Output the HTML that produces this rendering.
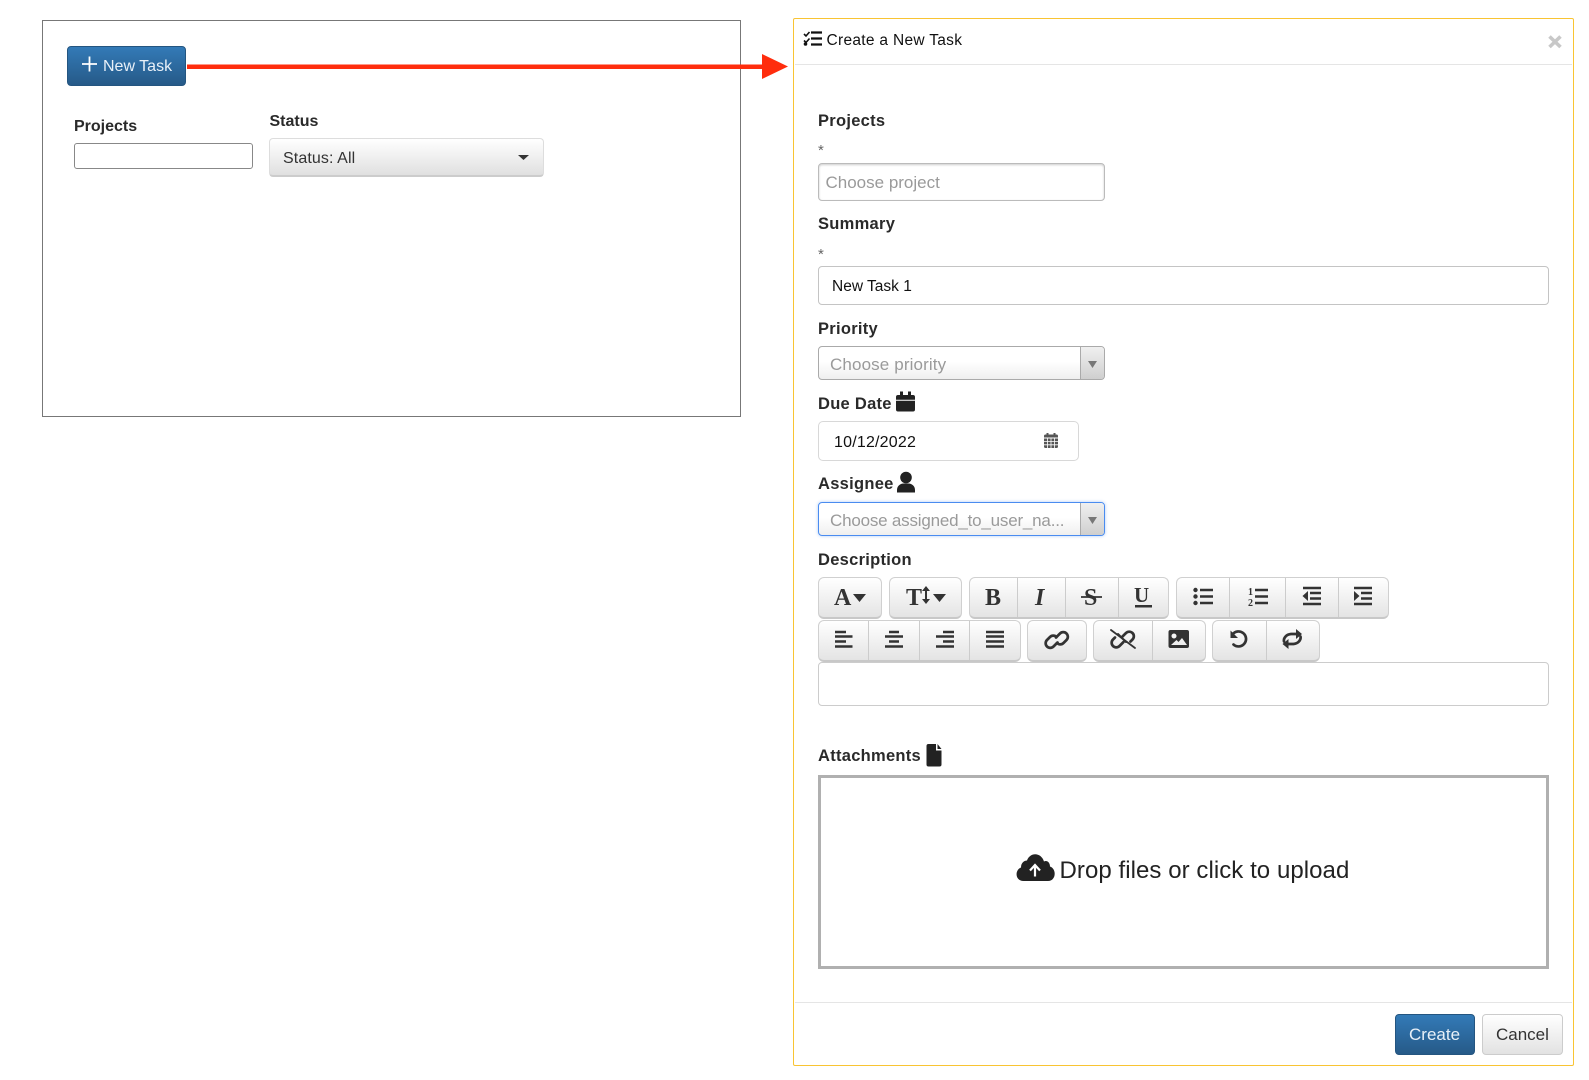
<!DOCTYPE html>
<html><head><meta charset="utf-8"><title>Create a New Task</title>
<style>
html,body{margin:0;padding:0;background:#fff;width:1589px;height:1080px;overflow:hidden}
body{position:relative;font-family:"Liberation Sans",sans-serif;color:#222}
.a{position:absolute;box-sizing:border-box}
.t{position:absolute;white-space:nowrap;line-height:1}
.l{font-weight:bold;font-size:16.5px;color:#2a2a2a;letter-spacing:.28px}
.ll{font-weight:bold;font-size:16px;color:#2a2a2a}
.ph{color:#9a9a9a;font-size:17px}
.inp{background:#fff;border:1px solid #bbb;border-radius:4px}
.sel{background:linear-gradient(#fff 45%,#efefef);border:1px solid #aaa;border-radius:4px}
.arrowbox{position:absolute;right:0;top:0;bottom:0;width:23px;background:linear-gradient(#f0f0f0,#cfcfcf);border-left:1px solid #aaa;border-radius:0 3px 3px 0}
.tb{position:absolute;box-sizing:border-box;background:linear-gradient(#fff,#e4e4e4);border:1px solid #d0d0d0;border-bottom:2px solid #c8c8c8;border-radius:6px}
.sp{position:absolute;top:0;bottom:0;width:1px;background:#ccc}
.blue{background:linear-gradient(#337ab7,#265a88);border:1px solid #245580;border-radius:4px;color:#fff}
.g{font-family:"Liberation Serif",serif;font-weight:bold;fill:#333}
</style></head><body>

<div class="a" style="left:42px;top:20px;width:699px;height:397px;border:1px solid #777"></div>
<div class="a blue" style="left:67px;top:46px;width:119px;height:40px"></div>
<div class="t" style="left:103px;top:59px;font-size:16px;color:#e8f0f8">New Task</div>
<div class="t ll" style="left:74px;top:119px">Projects</div>
<div class="a" style="left:74px;top:143px;width:179px;height:26px;background:#fff;border:1px solid #888;border-radius:3px"></div>
<div class="t ll" style="left:269.500px;top:113.500px">Status</div>
<div class="a" style="left:269px;top:138px;width:275px;height:39px;background:linear-gradient(#fff,#e0e0e0);border:1px solid #ddd;border-bottom:2px solid #ccc;border-radius:4px"></div>
<div class="t" style="left:283px;top:151px;font-size:16px;letter-spacing:.1px;color:#333">Status: All</div>

<div class="a" style="left:793px;top:18px;width:781px;height:1048px;border:1.700px solid #f9c433;border-radius:2px"></div>
<div class="a" style="left:795px;top:64px;width:777px;height:1px;background:#e5e5e5"></div>
<div class="t" style="left:826.500px;top:33px;font-size:15.500px;letter-spacing:.3px;color:#111">Create a New Task</div>

<div class="t l" style="left:818px;top:112.500px">Projects</div>
<div class="t" style="left:818px;top:143px;font-size:15px;color:#666">*</div>
<div class="a inp" style="left:818px;top:163px;width:287px;height:38px;box-shadow:inset 0 1px 2px #ccc"></div>
<div class="t ph" style="left:825.500px;top:174px">Choose project</div>

<div class="t l" style="left:818px;top:215.500px">Summary</div>
<div class="t" style="left:818px;top:246.500px;font-size:15px;color:#666">*</div>
<div class="a inp" style="left:818px;top:266px;width:731px;height:39px;border-color:#c4c4c4"></div>
<div class="t" style="left:832px;top:279px;font-size:15.500px;color:#111">New Task 1</div>

<div class="t l" style="left:818px;top:320.500px">Priority</div>
<div class="a sel" style="left:818px;top:346px;width:287px;height:34px"><div class="arrowbox"></div></div>
<div class="t ph" style="left:830px;top:356px;letter-spacing:.13px">Choose priority</div>

<div class="t l" style="left:818px;top:396px">Due Date</div>
<div class="a" style="left:818px;top:421px;width:261px;height:40px;background:#fff;border:1px solid #d8d8d8;border-radius:5px"></div>
<div class="t" style="left:834px;top:434.500px;font-size:16px;letter-spacing:.2px;color:#111">10/12/2022</div>

<div class="t l" style="left:818px;top:475.500px">Assignee</div>
<div class="a sel" style="left:818px;top:502px;width:287px;height:34px;border-color:#4a8cf0;box-shadow:0 0 3px rgba(74,140,240,.45)"><div class="arrowbox"></div></div>
<div class="t ph" style="left:830px;top:512px;letter-spacing:-.2px">Choose assigned_to_user_na...</div>

<div class="t l" style="left:818px;top:551.500px">Description</div>

<div class="tb" style="left:818px;top:577px;width:64px;height:42px"></div>
<div class="tb" style="left:889px;top:577px;width:73px;height:42px"></div>
<div class="tb" style="left:969px;top:577px;width:200px;height:42px"><div class="sp" style="left:47px"></div><div class="sp" style="left:95px"></div><div class="sp" style="left:148px"></div></div>
<div class="tb" style="left:1176px;top:577px;width:213px;height:42px"><div class="sp" style="left:52px"></div><div class="sp" style="left:108px"></div><div class="sp" style="left:161px"></div></div>
<div class="tb" style="left:818px;top:619.500px;width:203px;height:42px"><div class="sp" style="left:49px"></div><div class="sp" style="left:100px"></div><div class="sp" style="left:150px"></div></div>
<div class="tb" style="left:1027px;top:619.500px;width:60px;height:42px"></div>
<div class="tb" style="left:1093px;top:619.500px;width:113px;height:42px"><div class="sp" style="left:58px"></div></div>
<div class="tb" style="left:1212px;top:619.500px;width:108px;height:42px"><div class="sp" style="left:53px"></div></div>

<div class="a" style="left:818px;top:662px;width:731px;height:44px;background:#fff;border:1px solid #ccc;border-radius:4px"></div>

<div class="t l" style="left:818px;top:748px">Attachments</div>
<div class="a" style="left:818px;top:775px;width:731px;height:194px;border:3px solid #b0b0b0"></div>
<div class="t" style="left:1059.500px;top:859px;font-size:24px;letter-spacing:.06px;color:#222">Drop files or click to upload</div>

<div class="a" style="left:795px;top:1002px;width:777px;height:1px;background:#e5e5e5"></div>
<div class="a blue" style="left:1395px;top:1014px;width:80px;height:41px"></div>
<div class="t" style="left:1409px;top:1026px;font-size:17px;color:#e8f0f8">Create</div>
<div class="a" style="left:1482px;top:1014px;width:81px;height:41px;background:linear-gradient(#fff,#e2e2e2);border:1px solid #ccc;border-radius:4px"></div>
<div class="t" style="left:1496px;top:1026px;font-size:17px;color:#333">Cancel</div>

<svg class="a" style="left:0;top:0" width="1589" height="1080" viewBox="0 0 1589 1080">
<!-- red arrow -->
<rect x="187" y="64.500" width="578" height="4.500" fill="#ff2d0d"/>
<path d="M762 54L788 66.500L762 79Z" fill="#ff2d0d"/>
<!-- plus -->
<path d="M89.500 56.500V71.500M82 64H97" stroke="#fff" stroke-width="1.800" fill="none"/>
<!-- status caret -->
<path d="M518 155H529L523.500 160Z" fill="#333"/>
<!-- header tasks icon -->
<path d="M804 34l2 2 3.500-4M804 40.500l2 2 3.500-4" stroke="#111" stroke-width="1.600" fill="none"/>
<circle cx="805.500" cy="44" r="1.800" fill="#111"/>
<path d="M811 32.500H822M811 38.500H822M811 44.500H822" stroke="#111" stroke-width="2.300" fill="none"/>
<!-- close -->
<path d="M1549.500 36.500L1560.500 47M1560.500 36.500L1549.500 47" stroke="#c8c8c8" stroke-width="3.600" fill="none"/>
<!-- select arrows -->
<path d="M1088 361H1097L1092.500 368Z" fill="#777"/>
<path d="M1088 517H1097L1092.500 524Z" fill="#777"/>
<!-- due calendar -->
<path d="M896 397a2 2 0 0 1 2-2h2v-3.500h3v3.500h5v-3.500h3v3.500h2a2 2 0 0 1 2 2v2.800h-19ZM896 400.700h19v8.800a2 2 0 0 1-2 2h-15a2 2 0 0 1-2-2Z" fill="#222"/>
<!-- input calendar -->
<path d="M1044 436a1.500 1.500 0 0 1 1.500-1.500h1v-1.500h2v1.500h5v-1.500h2v1.500h1a1.500 1.500 0 0 1 1.500 1.500v1.500h-14Z" fill="#555"/>
<path d="M1044 438.500h14v8a1.500 1.500 0 0 1-1.500 1.500h-11a1.500 1.500 0 0 1-1.500-1.500Z" fill="#555"/>
<path d="M1047.500 438.500v9.500M1051 438.500v9.500M1054.500 438.500v9.500M1044 441.500h14M1044 444.800h14" stroke="#fff" stroke-width=".8"/>
<!-- person -->
<circle cx="906" cy="477.500" r="5.800" fill="#222"/>
<path d="M897 492.500v-2.500a6.500 6.500 0 0 1 6.500-6.500h5a6.500 6.500 0 0 1 6.500 6.500v2.500Z" fill="#222"/>
<!-- file -->
<path d="M926.500 746a2 2 0 0 1 2-2h7.500v6.500h5.500v14a2 2 0 0 1-2 2h-11a2 2 0 0 1-2-2Z" fill="#222"/>
<path d="M937.500 744l4 5h-4Z" fill="#222"/>
<!-- cloud -->
<path d="M1023.500 881C1015 881 1014.500 870 1021 867.500C1021 862.500 1024.500 860.500 1027 860.500C1030 852 1041 852 1044 861.500C1047 860 1050 862.500 1050 866.500C1057 869 1056 881 1048 881Z" fill="#222"/>
<path d="M1035 876.500V866M1030 870.500L1035 865L1040 870.500" stroke="#fff" stroke-width="2.200" fill="none"/>
<!-- toolbar row 1 -->
<text class="g" x="834" y="605" font-size="24">A</text>
<path d="M853 594H866L859.500 602Z" fill="#333"/>
<text class="g" x="906" y="605" font-size="24">T</text>
<path d="M926 590V600" stroke="#333" stroke-width="2" fill="none"/>
<path d="M922 591L926 586L930 591ZM922 599L926 604L930 599Z" fill="#333"/>
<path d="M933 594H946L939.500 602Z" fill="#333"/>
<text class="g" x="985" y="605" font-size="24">B</text>
<text class="g" x="1035" y="605" font-size="24" font-style="italic">I</text>
<text class="g" x="1084" y="605" font-size="24">S</text>
<path d="M1081 597H1102" stroke="#333" stroke-width="1.800"/>
<text class="g" x="1134" y="602" font-size="21">U</text>
<rect x="1135" y="605" width="17" height="2.500" fill="#333"/>
<!-- lists -->
<circle cx="1195.500" cy="590" r="2.200" fill="#333"/><circle cx="1195.500" cy="596.500" r="2.200" fill="#333"/><circle cx="1195.500" cy="603" r="2.200" fill="#333"/>
<path d="M1200 590H1213M1200 596.500H1213M1200 603H1213" stroke="#333" stroke-width="2.500" fill="none"/>
<text class="g" x="1248" y="595" font-size="10">1</text><text class="g" x="1248" y="606" font-size="10">2</text>
<path d="M1255 590H1268M1255 596.500H1268M1255 603H1268" stroke="#333" stroke-width="2.500" fill="none"/>
<path d="M1303 588H1321M1310 593H1321M1310 598.500H1321M1303 604H1321" stroke="#333" stroke-width="2.500" fill="none"/>
<path d="M1308 591V601L1302.500 596Z" fill="#333"/>
<path d="M1354 588H1372M1361 593H1372M1361 598.500H1372M1354 604H1372" stroke="#333" stroke-width="2.500" fill="none"/>
<path d="M1354 591V601L1359.500 596Z" fill="#333"/>
<!-- align -->
<path d="M835 632H846M835 636.500H852.500M835 641.500H846M835 646.500H852.500" stroke="#333" stroke-width="2.400" fill="none"/>
<path d="M889 632H899M885 636.500H903M889 641.500H899M885 646.500H903" stroke="#333" stroke-width="2.400" fill="none"/>
<path d="M943 632H954M936 636.500H954M943 641.500H954M936 646.500H954" stroke="#333" stroke-width="2.400" fill="none"/>
<path d="M986 632H1004M986 636.500H1004M986 641.500H1004M986 646.500H1004" stroke="#333" stroke-width="2.400" fill="none"/>
<!-- link -->
<g fill="none" stroke="#333" stroke-width="2.700" stroke-linecap="round">
<path d="M1056 637.500l4-4a4.500 4.500 0 0 1 6.500 6.500l-3 3a4.500 4.500 0 0 1-6.500 0"/>
<path d="M1057.500 642.500l-4 4a4.500 4.500 0 0 1-6.500-6.500l3-3a4.500 4.500 0 0 1 6.500 0"/>
<!-- unlink -->
<path d="M1122 637l4-4a4.500 4.500 0 0 1 6.500 6.500l-2 2"/>
<path d="M1123.500 642l-4 4a4.500 4.500 0 0 1-6.500-6.500l2-2"/>
<path d="M1111 630L1135 648" stroke-width="1.800"/>
<path d="M1118 634l8 8" stroke-width="2"/>
<!-- undo -->
<path d="M1232.500 634.500a7.500 7.500 0 1 1 1 10"/>
<!-- retweet -->
<path d="M1284 641.500a8 6.500 0 0 1 7-7.500h6"/>
<path d="M1300.500 636.500a8 6.500 0 0 1-7 7.500h-6"/>
</g>
<path d="M1230.500 630.500V638H1238Z" fill="#333"/>
<path d="M1296 629L1302 634L1296 639Z" fill="#333"/>
<path d="M1288.500 639L1282.500 644L1288.500 649Z" fill="#333"/>
<!-- image -->
<path fill-rule="evenodd" d="M1170.500 630h16.500a2 2 0 0 1 2 2v14a2 2 0 0 1-2 2h-16.500a2 2 0 0 1-2-2v-14a2 2 0 0 1 2-2ZM1171 645h16l-5-7-3.500 4-2-2ZM1174 633.500a2.500 2.500 0 1 0 .01 0Z" fill="#333"/>
</svg>
</body></html>
